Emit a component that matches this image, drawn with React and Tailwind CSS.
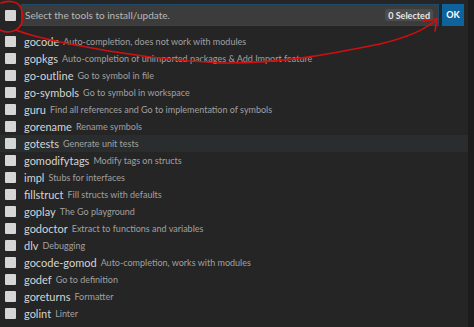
import React from "react";

const TOOLS = [
  ["gocode", "Auto-completion, does not work with modules"],
  ["gopkgs", "Auto-completion of unimported packages & Add Import feature"],
  ["go-outline", "Go to symbol in file"],
  ["go-symbols", "Go to symbol in workspace"],
  ["guru", "Find all references and Go to implementation of symbols"],
  ["gorename", "Rename symbols"],
  ["gotests", "Generate unit tests"],
  ["gomodifytags", "Modify tags on structs"],
  ["impl", "Stubs for interfaces"],
  ["fillstruct", "Fill structs with defaults"],
  ["goplay", "The Go playground"],
  ["godoctor", "Extract to functions and variables"],
  ["dlv", "Debugging"],
  ["gocode-gomod", "Auto-completion, works with modules"],
  ["godef", "Go to definition"],
  ["goreturns", "Formatter"],
  ["golint", "Linter"],
];

function Box() {
  return <div className="w-[11px] h-[11px] shrink-0 rounded-[1px] bg-[#d6d6d6]" />;
}

export default function App() {
  return (
    <div
      className="relative w-[474px] h-[327px] overflow-hidden bg-[#252526] flex"
      style={{ fontFamily: 'Lato, "Open Sans", sans-serif' }}
    >
      <div className="flex-1 flex flex-col">
        <div className="h-[33px] flex items-start pt-[4px]">
          <div className="w-[20px] h-[22px] flex items-center pl-[5px]">
            <Box />
          </div>
          <div className="flex-1 h-[22px] ml-[1px] flex items-center bg-[#3c3c3c] border border-[#1d4a6b] pl-[3px] pr-[5px]">
            <span className="flex-1 text-[10px] text-[#b8b8b8] leading-none">Select the tools to install/update.</span>
            <span className="px-[3px] h-[12px] flex items-center rounded-[3px] bg-[#4d4d4d] text-[9px] font-bold text-[#e8e8e8] leading-none">0 Selected</span>
          </div>
          <div className="w-[22px] h-[22px] ml-[3px] mr-[4px] flex items-center justify-center bg-[#0e639c] text-[9px] font-bold text-white">OK</div>
        </div>
        <div className="flex flex-col">
          {TOOLS.map(([name, desc]) => (
            <div
              key={name}
              className={`h-[17px] flex items-center pl-[5px] gap-[8px] whitespace-nowrap ${name === "gotests" ? "bg-[#2a2d2e]" : ""}`}
            >
              <Box />
              <span className="text-[11px] text-[#d4d4d4] leading-none">{name}</span>
              <span className="text-[9px] text-[#a0a0a0] leading-none -ml-[4px]">{desc}</span>
            </div>
          ))}
        </div>
      </div>
      <div className="w-[6px] bg-[#1c1c1c]" />

      <svg className="absolute inset-0 pointer-events-none" width="474" height="327" viewBox="0 0 474 327">
        <g fill="none" stroke="#d01010" strokeWidth="1.6" strokeLinecap="round">
          <path d="M1 3 C 8 0, 18 1, 21 8 C 24 16, 23 26, 16 30 C 10 33, 4 32, 0 30" />
          <path d="M16 30 C 30 36, 50 40, 70 44 C 110 52, 160 60, 220 63 C 280 64, 330 54, 380 44 C 405 38, 425 30, 436 20" />
          <path d="M423 21 L 437 19 L 435 31" />
        </g>
      </svg>
    </div>
  );
}
